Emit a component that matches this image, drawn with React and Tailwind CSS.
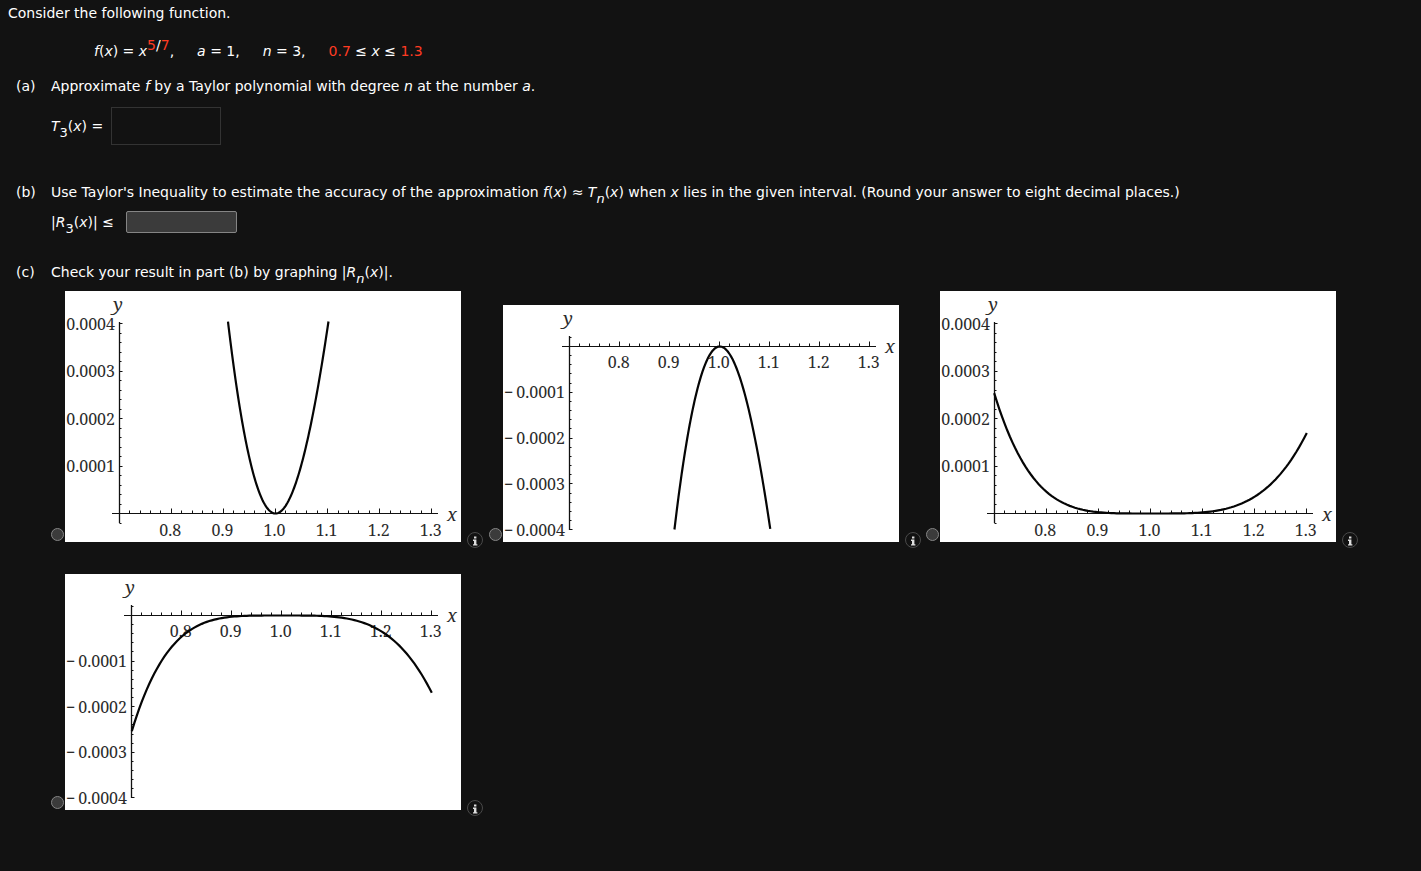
import React from "react";

const C1 = 5 / 7;
const C2 = (C1 * (C1 - 1)) / 2;
const C3 = (C2 * (C1 - 2)) / 3;

const remainder = (v) => {
  const d = v - 1;
  return Math.abs(Math.pow(v, C1) - (1 + C1 * d + C2 * d * d + C3 * d * d * d));
};
const bowl = (v) => {
  const d = v - 1;
  return 0.0441 * d * d - 0.0493 * d * d * d;
};

const UP = {
  height: 251, axisX: 54.5, axisY: 222.5, top: 31, bottom: 232,
  one: 210.5, unitX: 521, unitY: 47.5, sign: 1, left: 47, labelEnd: 50,
  yName: 53, xName: 387, xNameY: 230, labelY: 245,
};
const DOWN = {
  height: 237, axisX: 66.5, axisY: 41.5, top: 31, bottom: 225,
  one: 216.8, unitX: 500, unitY: 45.8, sign: -1, left: 59, labelEnd: 62,
  yName: 65, xName: 387, xNameY: 48, labelY: 63,
};

const GRAPHS = [
  { id: "g1", name: "Upward parabola, minimum at x = 1", frame: UP, fn: bowl, from: 0.9088, to: 1.1017 },
  { id: "g2", name: "Downward parabola, maximum at x = 1", frame: DOWN, fn: bowl, from: 0.9093, to: 1.1009 },
  { id: "g3", name: "Flat upward curve, minimum at x = 1", frame: UP, fn: remainder, from: 0.7, to: 1.3 },
  { id: "g4", name: "Flat downward curve, maximum at x = 1", frame: { ...DOWN, height: 236, bottom: 224, unitY: 45.6 }, fn: remainder, from: 0.7, to: 1.3 },
];

const snap = (n) => Math.floor(n) + 0.5;

function Plot({ frame: f, fn, from, to, name }) {
  const px = (v) => f.one + (v - 1) * f.unitX;
  const py = (v) => f.axisY - f.sign * v * 10000 * f.unitY;
  const points = Array.from({ length: 121 }, (_, i) => {
    const v = from + ((to - from) * i) / 120;
    return `${px(v).toFixed(2)},${py(fn(v)).toFixed(2)}`;
  }).join(" ");
  const xTicks = Array.from({ length: 30 }, (_, i) => i + 1);
  const yTicks = Array.from({ length: 20 }, (_, i) => i + 1);
  return (
    <svg width="396" height={f.height} viewBox={`0 0 396 ${f.height}`} role="img" aria-label={name} className="block shrink-0 bg-white">
      <g stroke="#111" strokeWidth="1" fill="none">
        <path d={`M${f.axisX} ${f.top}V${f.bottom}`} strokeWidth="1.3" />
        <path d={`M${f.left} ${f.axisY}H373`} />
        {xTicks.map((i) => (
          <path key={i} d={`M${snap(px(0.7 + i * 0.02))} ${f.axisY}v${i % 5 === 0 ? -5 : -3}`} />
        ))}
        {yTicks.map((i) => (
          <path key={i} d={`M${f.axisX} ${snap(f.axisY - (f.sign * i * f.unitY) / 5)}h${i % 5 === 0 ? 3 : 2}`} />
        ))}
        <path d={`M${f.axisX} ${snap(f.axisY + (f.sign * f.unitY) / 5)}h2`} />
      </g>
      <g fill="#2b2b2b" className="font-['Noto_Serif','Droid_Serif','Liberation_Serif',serif] text-[16px]">
        {["0.8", "0.9", "1.0", "1.1", "1.2", "1.3"].map((t) => (
          <text key={t} x={px(Number(t)) - 1} y={f.labelY} textAnchor="middle">{t}</text>
        ))}
        {[1, 2, 3, 4].map((n) => {
          const y = Math.round(f.axisY - f.sign * n * f.unitY + 6);
          return (
            <g key={n}>
              {f.sign < 0 && <text x="1" y={y}>−</text>}
              <text x={f.labelEnd} y={y} textAnchor="end">0.000{n}</text>
            </g>
          );
        })}
        <g className="text-[18px] italic">
          <text x={f.yName} y="20" textAnchor="middle">y</text>
          <text x={f.xName} y={f.xNameY} textAnchor="middle">x</text>
        </g>
      </g>
      <polyline points={points} fill="none" stroke="#050505" strokeWidth="2.2" />
    </svg>
  );
}

function InfoButton() {
  return (
    <button type="button" aria-label="Graph description" className="ml-[6px] block size-4 shrink-0">
      <svg width="16" height="16" viewBox="0 0 16 16" aria-hidden="true">
        <circle cx="8" cy="8" r="7.5" fill="#121212" stroke="#4a4a4a" />
        <path d="M7 4.6h2.4v2H7zM6 7.6h3.4v4.6h1v1.3H6v-1.3h1V8.9H6z" fill="#dedede" />
      </svg>
    </button>
  );
}

const Red = ({ children }) => <span className="text-[#ff3b22]">{children}</span>;
const Sub = ({ children }) => <sub className="bottom-[-6px] text-[13px]">{children}</sub>;

function Part({ label, children, className }) {
  return (
    <section className={`flex ${className}`}>
      <div className="w-[35px] shrink-0">({label})</div>
      <div className="min-w-0 grow">{children}</div>
    </section>
  );
}

export default function App() {
  return (
    <main className="min-h-screen bg-[#121212] px-2 pt-1 pb-10 font-['Verdana','DejaVu_Sans',sans-serif] text-[14px] leading-[18px] text-white">
      <p>Consider the following function.</p>
      <p className="mt-5 flex items-baseline gap-[23px] pl-[86px]">
        <span><i>f</i>(<i>x</i>) = <i>x</i><sup className="top-[-6px] text-[14px] leading-none"><Red>5</Red>/<Red>7</Red></sup>,</span>
        <span><i>a</i> = 1,</span>
        <span><i>n</i> = 3,</span>
        <span><Red>0.7</Red> ≤ <i>x</i> ≤ <Red>1.3</Red></span>
      </p>

      <Part label="a" className="mt-[17px] pl-2">
        <p>Approximate <i>f</i> by a Taylor polynomial with degree <i>n</i> at the number <i>a</i>.</p>
        <div className="mt-3 flex items-center gap-2">
          <label htmlFor="taylor"><i>T</i><Sub>3</Sub>(<i>x</i>) =</label>
          <input id="taylor" type="text" className="h-[38px] w-[110px] border border-[#333] bg-[#121212] px-1 outline-none" />
        </div>
      </Part>

      <Part label="b" className="mt-[38px] pl-2">
        <p>
          Use Taylor's Inequality to estimate the accuracy of the approximation <i>f</i>(<i>x</i>) ≈ <i>T</i><Sub><i>n</i></Sub>(<i>x</i>) when <i>x</i> lies in the given interval. (Round your answer to eight decimal places.)
        </p>
        <div className="mt-[10px] flex items-center gap-3">
          <label htmlFor="bound">|<i>R</i><Sub>3</Sub>(<i>x</i>)| ≤</label>
          <input id="bound" type="text" className="h-[22px] w-[111px] rounded-[2px] border border-[#858585] bg-[#3b3b3b] px-1 outline-none" />
        </div>
      </Part>

      <Part label="c" className="mt-[30px] pl-2">
        <p>Check your result in part (b) by graphing |<i>R</i><Sub><i>n</i></Sub>(<i>x</i>)|.</p>
        <div className="mt-[10px] grid max-w-[1313px] grid-cols-3 items-end gap-y-[26px]">
          {GRAPHS.map(({ id, ...graph }) => (
            <div key={id} className="flex items-end">
              <label className="flex items-end pb-[6px]">
                <input type="radio" name="graph" value={id} className="mr-px mb-px size-[13px] shrink-0 appearance-none rounded-full border border-[#858585] bg-[#3b3b3b] checked:bg-[#ddd]" />
                <Plot {...graph} />
              </label>
              <InfoButton />
            </div>
          ))}
        </div>
      </Part>
    </main>
  );
}
